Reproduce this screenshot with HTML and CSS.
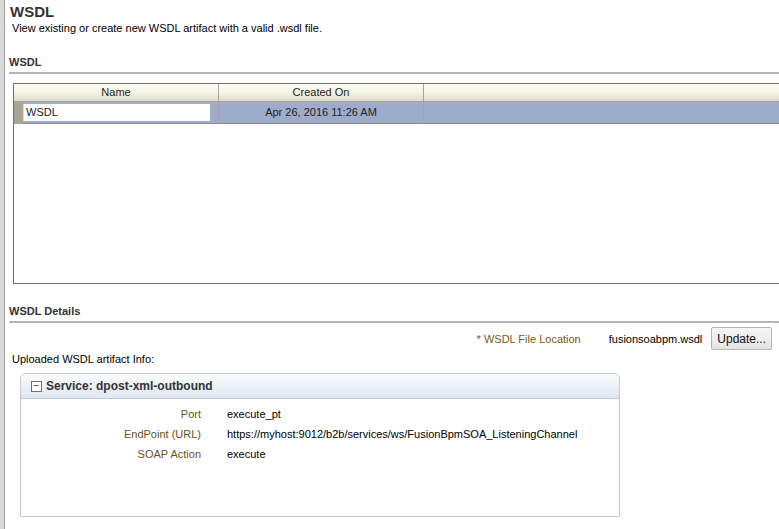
FILE: index.html
```html
<!DOCTYPE html>
<html lang="en">
<head>
    <meta charset="UTF-8">
    <title>WSDL</title>
    <link rel="stylesheet" href="styles.css">
</head>
<body>
    <div class="page">
        <h1 class="title">WSDL</h1>
        <p class="intro">View existing or create new WSDL artifact with a valid .wsdl file.</p>

        <h2 class="section">WSDL</h2>
        <div class="table">
            <div class="row head">
                <div class="cell c-name">Name</div>
                <div class="cell c-date">Created On</div>
                <div class="cell c-fill"></div>
            </div>
            <div class="row selected">
                <div class="cell c-name"><span class="grip"></span><span class="input">WSDL</span></div>
                <div class="cell c-date">Apr 26, 2016 11:26 AM</div>
                <div class="cell c-fill"></div>
            </div>
        </div>

        <h2 class="section details">WSDL Details</h2>
        <div class="location">
            <span class="loc-label"><span class="req">*</span> WSDL File Location</span>
            <span class="loc-value">fusionsoabpm.wsdl</span>
            <button class="btn">Update...</button>
        </div>

        <p class="uploaded">Uploaded WSDL artifact Info:</p>

        <div class="panel">
            <div class="panel-head">
                <span class="toggle">&minus;</span>
                <span>Service: dpost-xml-outbound</span>
            </div>
            <div class="panel-body">
                <div class="prop"><span class="prop-label">Port</span><span class="prop-value">execute_pt</span></div>
                <div class="prop"><span class="prop-label">EndPoint (URL)</span><span class="prop-value">https://myhost:9012/b2b/services/ws/FusionBpmSOA_ListeningChannel</span></div>
                <div class="prop"><span class="prop-label">SOAP Action</span><span class="prop-value">execute</span></div>
            </div>
        </div>
    </div>
</body>
</html>
```

FILE: styles.css
```css
body {
    margin: 0;
    background-color: #ffffff;
    font-family: "Liberation Sans", Arial, sans-serif;
    font-size: 11px;
    color: #000000;
}

.page {
    min-height: 529px;
    border-left: 4px solid #d8d8d8;
    box-shadow: inset 1px 0 0 #a0a0a0;
    padding: 3px 0 0 6px;
    box-sizing: border-box;
    overflow: hidden;
}

.title {
    margin: 0;
    font-size: 15px;
    font-weight: bold;
    color: #333333;
    line-height: 18px;
}

.intro {
    margin: 0 0 0 2px;
    line-height: 14px;
}

.section {
    margin: 20px 0 0 -1px;
    font-size: 11px;
    font-weight: bold;
    color: #333333;
    line-height: 14px;
    padding-bottom: 3px;
    border-bottom: 2px solid #b4b4b4;
}

.section.details {
    margin-top: 20px;
}

/* Table */
.table {
    margin: 9px 0 0 3px;
    height: 201px;
    border: 1px solid #6f6f6f;
    border-right: none;
    box-sizing: border-box;
}

.row {
    display: flex;
}

.cell {
    text-align: center;
    box-sizing: border-box;
    border-right: 1px solid #a4a49a;
}

.c-name {
    width: 205px;
}

.c-date {
    width: 205px;
}

.c-fill {
    flex: 1;
    border-right: none;
}

.head .cell {
    height: 18px;
    line-height: 17px;
    background: linear-gradient(#fffef5, #f6f4e6 50%, #dedbc6);
    border-bottom: 1px solid #a4a49a;
    color: #222222;
}

.selected .cell {
    height: 22px;
    line-height: 21px;
    background-color: #9eabcb;
    border-bottom: 1px solid #8c8c8c;
    color: #222222;
}

.selected .c-name {
    display: flex;
    align-items: center;
    padding: 0 8px 0 0;
}

.grip {
    width: 9px;
    height: 22px;
    background-color: #a8a596;
}

.input {
    flex: 1;
    height: 17px;
    line-height: 17px;
    background-color: #ffffff;
    text-align: left;
    padding-left: 2px;
    border-left: 1px solid #dcdcdc;
}

/* Details */
.location {
    display: flex;
    justify-content: flex-end;
    align-items: center;
    margin-top: 4px;
    padding-right: 7px;
}

.loc-label {
    color: #735b1a;
    margin-right: 28px;
}

.req {
    color: #4a5f7a;
}

.loc-value {
    margin-right: 9px;
}

.btn {
    font-family: "Liberation Sans", Arial, sans-serif;
    font-size: 12px;
    height: 23px;
    padding: 0 5px;
    border: 1px solid #b5b5b5;
    border-radius: 2px;
    background: linear-gradient(#f6f6f6, #e4e4e4);
    color: #111111;
}

.uploaded {
    margin: 2px 0 0 2px;
    line-height: 14px;
}

.panel {
    margin: 7px 0 0 10px;
    width: 600px;
    height: 144px;
    border: 1px solid #c8c8c8;
    border-radius: 6px 6px 0 0;
    box-sizing: border-box;
}

.panel-head {
    height: 24px;
    display: flex;
    align-items: center;
    gap: 4px;
    padding-left: 10px;
    font-size: 12px;
    font-weight: bold;
    color: #333333;
    background: linear-gradient(#fbfcfe, #dfe7f1);
    border-radius: 6px 6px 0 0;
    border-bottom: 1px solid #c8c8c8;
}

.toggle {
    width: 9px;
    height: 9px;
    border: 1px solid #707070;
    font-size: 10px;
    line-height: 8px;
    text-align: center;
    font-weight: normal;
    background-color: #ffffff;
}

.panel-body {
    padding-top: 5px;
}

.prop {
    display: flex;
    height: 20px;
    line-height: 20px;
}

.prop-label {
    width: 180px;
    text-align: right;
    color: #6b5219;
}

.prop-value {
    margin-left: 26px;
}
```
